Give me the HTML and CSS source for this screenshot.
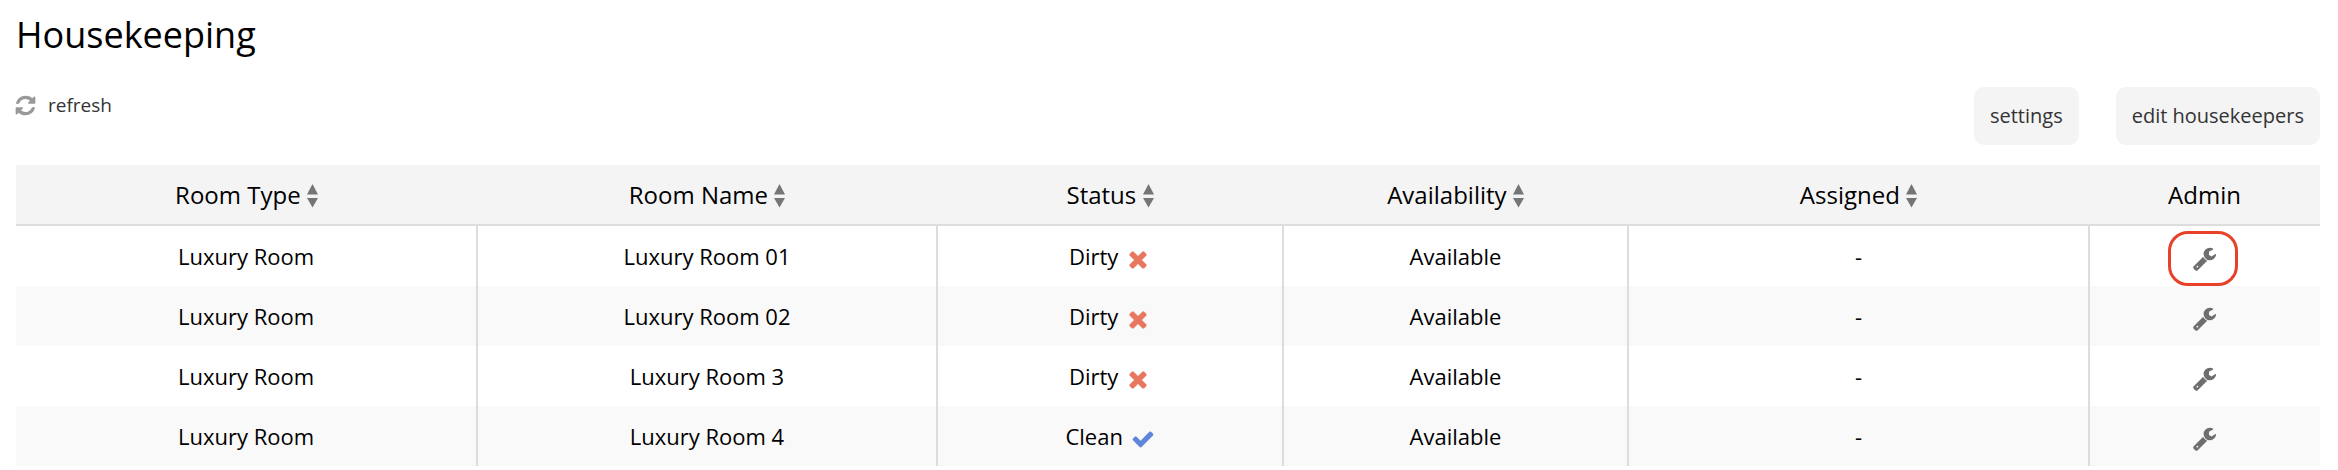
FILE: index.html
```html
<!DOCTYPE html>
<html lang="en">
<head>
    <meta charset="UTF-8">
    <meta name="viewport" content="width=device-width, initial-scale=1.0">
    <title>Housekeeping</title>
    <link rel="stylesheet" href="styles.css">
</head>

<body>
    <svg class="icon-defs" width="0" height="0">
        <symbol id="icon-wrench" viewBox="0 0 1792 1792"><path d="M448 1472q0-26-19-45t-45-19-45 19-19 45 19 45 45 19 45-19 19-45zm644-420l-682 682q-37 37-90 37-52 0-90-37l-106-108q-38-36-38-90 0-53 38-91l681-681q39 98 114.5 173.5t173.5 114.5zm634-435q0 39-23 106-47 134-164.5 217.5t-258.5 83.5q-185 0-316.5-131.5t-131.5-316.5 131.5-316.5 316.5-131.5q58 0 121.5 16.5t107.5 46.5q16 11 16 28t-16 28l-293 169v224l193 107q5-3 79-48.5t135.5-81 70.5-35.5q15 0 23.5 10t8.5 25z"/></symbol>
        <symbol id="icon-times" viewBox="0 0 1792 1792"><path d="M1490 1322q0 40-28 68l-136 136q-28 28-68 28t-68-28l-294-294-294 294q-28 28-68 28t-68-28l-136-136q-28-28-28-68t28-68l294-294-294-294q-28-28-28-68t28-68l136-136q28-28 68-28t68 28l294 294 294-294q28-28 68-28t68 28l136 136q28 28 28 68t-28 68l-294 294 294 294q28 28 28 68z"/></symbol>
        <symbol id="icon-check" viewBox="0 0 1792 1792"><path d="M1671 566q0 40-28 68l-724 724-136 136q-28 28-68 28t-68-28l-136-136-362-362q-28-28-28-68t28-68l136-136q28-28 68-28t68 28l294 295 656-657q28-28 68-28t68 28l136 136q28 28 28 68z"/></symbol>
        <symbol id="icon-refresh" viewBox="0 0 1792 1792"><path d="M1639 1056q0 5-1 7-64 268-268 434.5t-478 166.5q-146 0-282.5-55t-243.5-157l-129 129q-19 19-45 19t-45-19-19-45v-448q0-26 19-45t45-19h448q26 0 45 19t19 45-19 45l-137 137q71 66 161 102t187 36q134 0 250-65t186-179q11-17 53-117 8-23 30-23h192q13 0 22.5 9.5t9.5 22.5zm25-800v448q0 26-19 45t-45 19h-448q-26 0-45-19t-19-45 19-45l138-138q-148-137-349-137-134 0-250 65t-186 179q-11 17-53 117-8 23-30 23h-199q-13 0-22.5-9.5t-9.5-22.5v-7q65-268 270-434.5t480-166.5q146 0 284 55.5t245 156.5l130-129q19-19 45-19t45 19 19 45z"/></symbol>
        <symbol id="icon-sort" viewBox="0 0 11 24"><path d="M5.5 0 L11 10.5 H0 Z"/><path d="M0 14 H11 L5.5 23.5 Z"/></symbol>
    </svg>

    <h1 class="page-title">Housekeeping</h1>

    <div class="toolbar">
        <a class="refresh-link" href="#">
            <svg class="icon-refresh"><use href="#icon-refresh"/></svg>
            refresh
        </a>
        <div class="toolbar-buttons">
            <a class="btn" href="#">settings</a>
            <a class="btn" href="#">edit housekeepers</a>
        </div>
    </div>

    <table class="rooms-table">
        <colgroup>
            <col class="col-type">
            <col class="col-name">
            <col class="col-status">
            <col class="col-avail">
            <col class="col-assigned">
            <col class="col-admin">
        </colgroup>
        <thead>
            <tr>
                <th>Room Type <svg class="icon-sort"><use href="#icon-sort"/></svg></th>
                <th>Room Name <svg class="icon-sort"><use href="#icon-sort"/></svg></th>
                <th>Status <svg class="icon-sort"><use href="#icon-sort"/></svg></th>
                <th>Availability <svg class="icon-sort"><use href="#icon-sort"/></svg></th>
                <th>Assigned <svg class="icon-sort"><use href="#icon-sort"/></svg></th>
                <th>Admin</th>
            </tr>
        </thead>
        <tbody>
            <tr>
                <td>Luxury Room</td>
                <td>Luxury Room 01</td>
                <td>Dirty <svg class="icon-status dirty"><use href="#icon-times"/></svg></td>
                <td>Available</td>
                <td>-</td>
                <td class="admin-cell">
                    <svg class="icon-wrench"><use href="#icon-wrench"/></svg>
                    <span class="highlight"></span>
                </td>
            </tr>
            <tr>
                <td>Luxury Room</td>
                <td>Luxury Room 02</td>
                <td>Dirty <svg class="icon-status dirty"><use href="#icon-times"/></svg></td>
                <td>Available</td>
                <td>-</td>
                <td class="admin-cell"><svg class="icon-wrench"><use href="#icon-wrench"/></svg></td>
            </tr>
            <tr>
                <td>Luxury Room</td>
                <td>Luxury Room 3</td>
                <td>Dirty <svg class="icon-status dirty"><use href="#icon-times"/></svg></td>
                <td>Available</td>
                <td>-</td>
                <td class="admin-cell"><svg class="icon-wrench"><use href="#icon-wrench"/></svg></td>
            </tr>
            <tr>
                <td>Luxury Room</td>
                <td>Luxury Room 4</td>
                <td>Clean <svg class="icon-status clean"><use href="#icon-check"/></svg></td>
                <td>Available</td>
                <td>-</td>
                <td class="admin-cell"><svg class="icon-wrench"><use href="#icon-wrench"/></svg></td>
            </tr>
        </tbody>
    </table>
</body>
</html>
```

FILE: styles.css
```css
/* styles.css */
body {
    font-family: "Open Sans", sans-serif;
    font-size: 20px;
    color: #000;
    margin: 0;
    padding: 0 18px 0 16px;
    background-color: #fff;
}

a {
    color: #333;
    text-decoration: none;
}

.icon-defs {
    position: absolute;
}

.page-title {
    font-size: 36px;
    font-weight: 400;
    line-height: 50px;
    margin: 10px 0 0;
}

.toolbar {
    display: flex;
    justify-content: space-between;
    align-items: flex-start;
    margin-top: 27px;
}

.refresh-link {
    display: flex;
    align-items: center;
    gap: 11px;
    margin-top: 4px;
    margin-left: -2px;
    font-size: 19px;
    line-height: 28px;
}

.icon-refresh {
    width: 23px;
    height: 23px;
    fill: #999;
}

.toolbar-buttons {
    display: flex;
    gap: 37px;
}

.btn {
    padding: 15px 16px;
    line-height: 28px;
    background-color: #f4f4f4;
    border-radius: 10px;
}

.rooms-table {
    width: 100%;
    table-layout: fixed;
    border-collapse: collapse;
    margin-top: 20px;
    font-size: 22px;
}

.col-type,
.col-assigned {
    width: 461px;
}

.col-name {
    width: 460px;
}

.col-status {
    width: 346px;
}

.col-avail {
    width: 345px;
}

.col-admin {
    width: 231px;
}

.rooms-table th {
    height: 59px;
    padding: 0;
    font-size: 24px;
    font-weight: 400;
    background-color: #f4f4f4;
    border-bottom: 2px solid #ddd;
}

.rooms-table td {
    height: 60px;
    padding: 0;
    text-align: center;
    border-right: 2px solid #ddd;
}

.rooms-table td:last-child {
    border-right: none;
}

.rooms-table tbody tr:nth-child(even) {
    background-color: #f9f9f9;
}

.icon-sort {
    width: 11px;
    height: 24px;
    fill: #757575;
    vertical-align: -4px;
}

.icon-status {
    width: 26px;
    height: 26px;
    vertical-align: -7px;
    margin-left: 1px;
}

.dirty {
    fill: #e8775f;
}

.clean {
    width: 24px;
    height: 24px;
    vertical-align: -6px;
    margin-left: 2px;
    fill: #5f86d8;
}

.admin-cell {
    position: relative;
}

.icon-wrench {
    width: 25px;
    height: 25px;
    margin-left: -1px;
    fill: #6e6e6e;
    vertical-align: middle;
}

.highlight {
    position: absolute;
    left: 78px;
    top: 5px;
    width: 64px;
    height: 49px;
    border: 3px solid #e8412a;
    border-radius: 20px;
}
```
